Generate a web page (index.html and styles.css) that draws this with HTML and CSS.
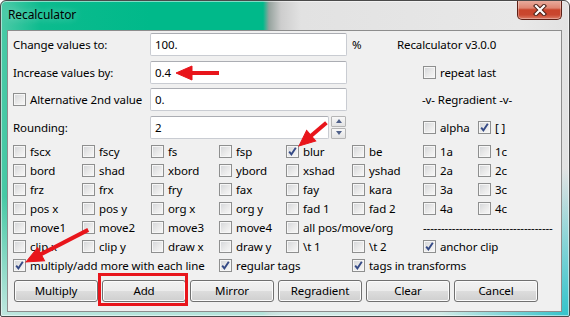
FILE: index.html
```html
<!DOCTYPE html>
<html lang="en">
<head>
    <meta charset="UTF-8">
    <meta name="viewport" content="width=device-width, initial-scale=1.0">
    <title>Recalculator</title>
    <link rel="stylesheet" href="styles.css">
</head>
<body>

<div class="window">

    <!-- Title bar -->
    <div class="titlebar">
        <span class="title">Recalculator</span>
        <div class="close-btn">
            <svg width="14" height="12" viewBox="0 0 14 12">
                <path d="M3 2 L11 10 M11 2 L3 10" stroke="#4b2219" stroke-width="4.2" stroke-linecap="square" fill="none"/>
                <path d="M3 2 L11 10 M11 2 L3 10" stroke="#ffffff" stroke-width="2.2" stroke-linecap="square" fill="none"/>
            </svg>
        </div>
    </div>

    <div class="client">

        <!-- Value fields -->
        <div class="values">
            <span class="label">Change values to:</span>
            <div class="input">100.</div>
            <span class="unit">%</span>
            <span class="version">Recalculator v3.0.0</span>

            <span class="label">Increase values by:</span>
            <div class="input">0.4</div>
            <span></span>
            <label class="check side"><span class="box"></span>repeat last</label>

            <label class="check label"><span class="box"></span>Alternative 2nd value</label>
            <div class="input">0.</div>
            <span></span>
            <span class="side regrad">-v- Regradient -v-</span>

            <span class="label">Rounding:</span>
            <div class="spin-wrap">
                <div class="input short">2</div>
                <div class="spinner">
                    <div class="spin-btn"><span class="tri up"></span></div>
                    <div class="spin-btn"><span class="tri down"></span></div>
                </div>
            </div>
            <span></span>
            <div class="side pair">
                <label class="check alpha"><span class="box"></span>alpha</label>
                <label class="check"><span class="box on"></span>[ ]</label>
            </div>
        </div>

        <!-- Tag checkboxes -->
        <div class="tags">
            <label class="check"><span class="box"></span>fscx</label>
            <label class="check"><span class="box"></span>fscy</label>
            <label class="check"><span class="box"></span>fs</label>
            <label class="check"><span class="box"></span>fsp</label>
            <label class="check"><span class="box on"></span>blur</label>
            <label class="check"><span class="box"></span>be</label>
            <label class="check"><span class="box"></span>1a</label>
            <label class="check"><span class="box"></span>1c</label>

            <label class="check"><span class="box"></span>bord</label>
            <label class="check"><span class="box"></span>shad</label>
            <label class="check"><span class="box"></span>xbord</label>
            <label class="check"><span class="box"></span>ybord</label>
            <label class="check"><span class="box"></span>xshad</label>
            <label class="check"><span class="box"></span>yshad</label>
            <label class="check"><span class="box"></span>2a</label>
            <label class="check"><span class="box"></span>2c</label>

            <label class="check"><span class="box"></span>frz</label>
            <label class="check"><span class="box"></span>frx</label>
            <label class="check"><span class="box"></span>fry</label>
            <label class="check"><span class="box"></span>fax</label>
            <label class="check"><span class="box"></span>fay</label>
            <label class="check"><span class="box"></span>kara</label>
            <label class="check"><span class="box"></span>3a</label>
            <label class="check"><span class="box"></span>3c</label>

            <label class="check"><span class="box"></span>pos x</label>
            <label class="check"><span class="box"></span>pos y</label>
            <label class="check"><span class="box"></span>org x</label>
            <label class="check"><span class="box"></span>org y</label>
            <label class="check"><span class="box"></span>fad 1</label>
            <label class="check"><span class="box"></span>fad 2</label>
            <label class="check"><span class="box"></span>4a</label>
            <label class="check"><span class="box"></span>4c</label>

            <label class="check"><span class="box"></span>move1</label>
            <label class="check"><span class="box"></span>move2</label>
            <label class="check"><span class="box"></span>move3</label>
            <label class="check"><span class="box"></span>move4</label>
            <label class="check span2"><span class="box"></span>all pos/move/org</label>
            <span class="dashes span2">------------------------------------</span>

            <label class="check"><span class="box"></span>clip x</label>
            <label class="check"><span class="box"></span>clip y</label>
            <label class="check"><span class="box"></span>draw x</label>
            <label class="check"><span class="box"></span>draw y</label>
            <label class="check"><span class="box"></span>\t 1</label>
            <label class="check"><span class="box"></span>\t 2</label>
            <label class="check span2"><span class="box on"></span>anchor clip</label>

            <label class="check span3"><span class="box on"></span>multiply/add more with each line</label>
            <label class="check span2"><span class="box on"></span>regular tags</label>
            <label class="check span3"><span class="box on"></span>tags in transforms</label>
        </div>

        <!-- Action buttons -->
        <div class="buttons">
            <div class="btn">Multiply</div>
            <div class="btn">Add</div>
            <div class="btn">Mirror</div>
            <div class="btn">Regradient</div>
            <div class="btn">Clear</div>
            <div class="btn">Cancel</div>
        </div>
    </div>

    <!-- Red annotations drawn over the dialog -->
    <svg class="marks" width="570" height="317" viewBox="0 0 570 317">
        <g fill="#e8151b" stroke="#e8151b">
            <g transform="translate(176 73)">
                <path d="M14 0 L43 0" stroke-width="4" fill="none"/>
                <path d="M0 0 L16 -7 L16 7 Z" stroke-width="1"/>
            </g>
            <g transform="translate(299 146) rotate(-40.4)">
                <path d="M14 0 L36 0" stroke-width="4" fill="none"/>
                <path d="M0 0 L16 -7 L16 7 Z" stroke-width="1"/>
            </g>
            <g transform="translate(26 262) rotate(-27.3)">
                <path d="M14 0 L70 0" stroke-width="4" fill="none"/>
                <path d="M0 0 L17 -7.5 L17 7.5 Z" stroke-width="1"/>
            </g>
        </g>
        <rect x="99.5" y="274.5" width="87" height="30" fill="none" stroke="#e8151b" stroke-width="3"/>
    </svg>
</div>

</body>
</html>
```

FILE: styles.css
```css
/* Basic page setup */
body {
    margin: 0;
    font-family: "Noto Sans", "Open Sans", sans-serif;
    font-size: 11.5px;
    letter-spacing: -0.1px;
    color: #000;
    background-color: #ffffff;
}

/* Window frame (Aero glass look) */
.window {
    position: relative;
    width: 570px;
    height: 317px;
    box-sizing: border-box;
    border: 1px solid #4a4a4a;
    border-radius: 6px 6px 2px 2px;
    display: flex;
    flex-direction: column;
    overflow: hidden;
    box-shadow: inset 0 0 0 1px rgba(255, 255, 255, 0.5);
    background:
        radial-gradient(130px 150px at 570px 317px, rgba(40, 192, 200, 0.95), rgba(40, 192, 200, 0)),
        linear-gradient(to bottom, rgba(225, 238, 236, 0) 0, rgba(225, 238, 236, 0) 62%, rgba(205, 234, 230, 0.9) 100%),
        linear-gradient(to right, #4ccaa7 0, #0cbb8e 40px, #00b98a 150px, #00b98a 262px, #96a39e 268px, #cdcdcd 280px, #e2e2e2 300px, #e8e8e8 520px, #e2e2e2 100%);
}

/* Title bar */
.titlebar {
    height: 29px;
    display: flex;
    align-items: flex-start;
}

.title {
    margin: 6px 0 0 7px;
    line-height: 16px;
    font-size: 12px;
    text-shadow: 0 0 8px rgba(255, 255, 255, 0.55);
}

.close-btn {
    margin: -1px 7px 0 auto;
    width: 45px;
    height: 20px;
    box-sizing: border-box;
    border: 1px solid #5e2016;
    border-top: none;
    border-radius: 0 0 5px 5px;
    display: flex;
    align-items: center;
    justify-content: center;
    background: linear-gradient(#eab0a2 0, #df8672 42%, #c9442b 52%, #c9472f 78%, #dc7c66 100%);
    box-shadow: inset 0 0 0 1px rgba(255, 255, 255, 0.3);
}

/* Client area */
.client {
    flex: 1;
    margin: 0 7px 4px 6px;
    border: 1px solid #8d8d8d;
    background-color: #f0f0f0;
    padding-top: 2px;
}

/* Top value fields */
.values {
    display: grid;
    grid-template-columns: 142px 197px 50px 1fr;
    grid-auto-rows: 23px;
    row-gap: 4.5px;
    align-items: center;
}

.label {
    padding-left: 5px;
}

.input {
    height: 23px;
    box-sizing: border-box;
    border: 1px solid #c9ccd2;
    border-top-color: #abadb3;
    border-radius: 2px;
    background-color: #ffffff;
    padding-left: 4px;
    line-height: 21px;
}

.unit {
    padding-left: 5px;
}

.side {
    padding-left: 26px;
}

.regrad {
    padding-left: 25px;
}

.pair {
    display: flex;
}

.alpha {
    width: 55px;
}

.spin-wrap {
    display: flex;
    gap: 2px;
}

.input.short {
    width: 179px;
}

.spinner {
    display: flex;
    flex-direction: column;
    gap: 1px;
}

.spin-btn {
    width: 15px;
    height: 11px;
    box-sizing: border-box;
    border: 1px solid #b5b5b5;
    border-radius: 1px;
    background: linear-gradient(#f8f8f8, #e3e3e3);
    display: flex;
    align-items: center;
    justify-content: center;
}

.tri {
    width: 0;
    height: 0;
    border-left: 3.5px solid transparent;
    border-right: 3.5px solid transparent;
}

.tri.up {
    border-bottom: 4px solid #4f6089;
}

.tri.down {
    border-top: 4px solid #4f6089;
}

/* Checkboxes */
.check {
    display: flex;
    align-items: center;
    gap: 4px;
    white-space: nowrap;
}

.box {
    flex: none;
    width: 13px;
    height: 13px;
    box-sizing: border-box;
    border: 1px solid #8e8f8f;
    background: linear-gradient(135deg, #d3d5d8 0, #eaeaea 55%, #f8f8f8 100%);
    box-shadow: inset 0 0 0 1px #f6f6f6;
}

.box.on {
    background:
        url("data:image/svg+xml;utf8,<svg xmlns='http://www.w3.org/2000/svg' width='11' height='11' viewBox='0 0 11 11'><path d='M2.2 5.6 L4.4 8.3 L8.8 1.8' stroke='%23354a86' stroke-width='1.9' fill='none'/></svg>") center / 11px 11px no-repeat,
        linear-gradient(135deg, #d3d5d8 0, #eaeaea 55%, #f8f8f8 100%);
}

/* Tag grid */
.tags {
    display: grid;
    grid-template-columns: 69px 69px 68px 67px 66px 71px 55px 1fr;
    grid-auto-rows: 19px;
    padding-left: 5px;
    margin-top: 3px;
    align-items: center;
}

.span2 {
    grid-column: span 2;
}

.span3 {
    grid-column: span 3;
}

.dashes {
    width: 134px;
    overflow: hidden;
    white-space: nowrap;
}

/* Buttons row */
.buttons {
    display: flex;
    gap: 4px;
    padding-left: 6px;
    margin-top: 5px;
}

.btn {
    width: 84px;
    height: 22px;
    box-sizing: border-box;
    border: 1px solid #707070;
    border-radius: 3px;
    background: linear-gradient(#f2f2f2 0, #ebebeb 50%, #dddddd 50%, #cfcfcf 100%);
    box-shadow: inset 0 0 0 1px #fbfbfb;
    display: flex;
    align-items: center;
    justify-content: center;
}

/* Annotation overlay */
.marks {
    position: absolute;
    left: -1px;
    top: -1px;
    pointer-events: none;
}
```
